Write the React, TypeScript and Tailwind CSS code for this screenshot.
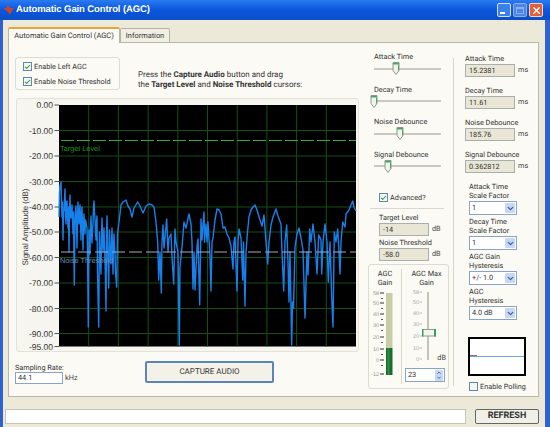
import { X, ChevronDown, ChevronUp, Check } from "lucide-react";

const font = "font-['Roboto','Liberation_Sans',sans-serif] [text-rendering:geometricPrecision]";

// plot coordinates are screen pixels, the graph svg viewBox starts at 16,97
const TICKS = [
  ["0.00", 103],
  ["-10.00", 128.5],
  ["-20.00", 154],
  ["-30.00", 179.5],
  ["-40.00", 205],
  ["-50.00", 230],
  ["-60.00", 255.5],
  ["-70.00", 281],
  ["-80.00", 306.5],
  ["-90.00", 331.5],
  ["-95.00", 344.5],
] as const;

const V_LINES = [87.7, 117.4, 147.1, 176.8, 206.5, 236.2, 265.9, 295.6, 325.3];

const TRACE = [
  [58, 215], [58.5, 190], [59, 184], [60, 180], [60.5, 200], [61, 215], [61.5, 200], [62, 238], [62.5, 210], [63, 208], [64, 187], [64.5, 215], [65, 222], [65.5, 200], [66, 199], [66.5, 215], [67, 226],
  [67.5, 205], [68, 250], [68.5, 215], [69, 193], [69.5, 212], [70, 216], [70.5, 208], [71, 203], [71.5, 218], [72, 232], [72.5, 210], [73.3, 283], [74, 218], [74.5, 208], [75, 204], [75.5, 225], [76, 246], [76.5, 215], [77, 200],
  [77.5, 215], [78, 222], [78.5, 208], [79, 203], [79.5, 220], [80, 238], [80.5, 212], [81, 205], [81.5, 225], [82, 248], [82.5, 220], [83, 212], [83.5, 225], [84, 232], [84.5, 218], [85, 220], [86, 226], [86.5, 250], [87.3, 325],
  [88, 228], [88.5, 240], [89, 252], [89.5, 225], [90, 214], [90.5, 230], [91, 241], [91.5, 228], [92, 222], [92.5, 205], [93, 199], [93.5, 210], [94, 217], [94.5, 230], [95, 238], [95.5, 220], [96, 214], [96.5, 270], [97.7, 325],
  [98.5, 230], [99, 250], [100, 272], [100.5, 235], [101, 216], [101.5, 235], [102, 250], [102.5, 235], [103, 226], [103.5, 245], [104, 258], [104.5, 280], [105, 309], [105.5, 235], [106, 214], [107, 260], [107.7, 286],
  [108.5, 228], [109, 245], [110, 262], [110.5, 240], [111, 226], [111.5, 250], [112, 272], [112.5, 245], [113, 232], [113.5, 245], [114, 250], [114.5, 270], [115.7, 285], [116.5, 232], [118, 220],
  [120, 203], [122, 200], [125, 198], [127, 204], [129, 207], [131, 215], [133, 206], [136.7, 200], [139, 204],
  [142, 211], [145, 204], [148, 202], [151, 203], [153, 205], [155, 220], [156.7, 240], [157.7, 278], [159, 250],
  [160.3, 291], [161, 240], [162, 223], [163, 246], [165.7, 217], [167, 250], [168, 236], [170, 232], [171, 255],
  [172.7, 282], [174, 227], [175, 240], [177, 250], [178.3, 343], [179, 265], [181, 245], [183, 220], [185, 226],
  [188, 212], [190, 222], [191, 240], [192, 287], [193, 250], [194, 288], [196, 245], [197, 237], [198.7, 303],
  [200, 217], [201, 238], [202, 222], [203, 210], [203.5, 240], [205, 222], [206, 240], [207, 220], [209, 254],
  [210, 289], [211, 240], [212, 236], [214, 218], [216, 207], [218, 208], [220, 212], [222, 226], [224, 225],
  [226, 232], [228, 236], [230, 244], [232, 267], [233, 240], [234, 235], [236, 289], [237, 240], [238, 227],
  [240, 236], [241.7, 278], [242.5, 240], [244, 304], [245, 250], [246.5, 230], [248, 215], [250, 208], [252, 205],
  [254, 203], [256, 208], [259, 218], [261, 224], [263, 213], [265, 240], [266.7, 262], [268, 240], [270, 223],
  [272, 215], [275, 207], [277, 214], [280, 222], [281, 250], [282.7, 289], [284, 240], [285.7, 223], [287, 260],
  [288, 300], [289, 250], [290.7, 343], [291.5, 300], [292.5, 306], [294, 245], [296, 232], [298, 226], [300, 236],
  [302, 248], [304, 316], [306, 250], [307, 273], [308.7, 227], [310, 240], [312, 222], [314, 240], [316, 272],
  [317.7, 233], [320, 238], [320.7, 272], [322, 240], [324, 222], [326, 240], [327.3, 280], [329, 240], [330.7, 295],
  [332, 325], [333.3, 230], [335, 240], [336.7, 227], [338, 250], [339, 272], [340, 240], [341.7, 220], [344, 225],
  [345, 212], [348, 208], [351.7, 199], [353, 205], [355, 209],
];

const tracePoints = TRACE.map((p) => p.join(",")).join(" ");

function Graph() {
  return (
    <svg viewBox="16 97 343 254" className="block w-[343px] h-[254px]">
      <rect x="58" y="103" width="297" height="241.5" fill="#000" />
      {TICKS.slice(1, 10).map(([, y]) => (
        <line key={y} x1="58" x2="355" y1={y} y2={y} stroke="#174f17" strokeWidth="1" />
      ))}
      {V_LINES.map((x) => (
        <line key={x} x1={x} x2={x} y1="103" y2="344.5" stroke="#174f17" strokeWidth="1" />
      ))}
      <line x1="60" x2="355" y1="138.5" y2="138.5" stroke="#3aa83a" strokeWidth="1" strokeDasharray="13 3" />
      <polyline points={tracePoints} fill="none" stroke="#1880ea" strokeWidth="1.4" strokeLinejoin="round" />
      <line x1="60" x2="355" y1="250" y2="250" stroke="#a9a9b8" strokeWidth="1" strokeDasharray="13 4" />
      <text x="59" y="149" fontSize="7.3" fill="#1f9a1f" fontFamily="Liberation Sans">Target Level</text>
      <text x="59" y="261" fontSize="7.3" fill="#6d8cb5" fontFamily="Liberation Sans">Noise Threshold</text>
      {TICKS.map(([label, y]) => (
        <g key={label}>
          <text x="52" y={y + 3} textAnchor="end" fontSize="8.5" fill="#333" fontFamily="Liberation Sans">{label}</text>
          <line x1="53.5" x2="58" y1={y} y2={y} stroke="#555" />
        </g>
      ))}
      <text transform="translate(27 225) rotate(-90)" textAnchor="middle" fontSize="8" fill="#333" fontFamily="Liberation Sans">
        Signal Amplitude (dB)
      </text>
    </svg>
  );
}

function Checkbox({ label, checked = true }: { label: string; checked?: boolean }) {
  return (
    <div className="flex items-center gap-[2px] h-[15px] whitespace-nowrap">
      <span className="flex items-center justify-center w-[9px] h-[9px] border border-[#5f88a8] bg-[#f4f6f2]">
        {checked && <Check size={8} strokeWidth={3.5} className="text-[#2f9a3a]" />}
      </span>
      <span className="text-[7.3px] text-[#333] leading-none">{label}</span>
    </div>
  );
}

function Slider({ label, pos }: { label: string; pos: number }) {
  return (
    <div className="h-[32.5px] pl-[6px]">
      <div className="text-[7.3px] leading-[10px] text-[#333] whitespace-nowrap">{label}</div>
      <div className="relative w-[67px] h-[13px] flex items-center">
        <div className="w-full h-[2px] bg-[#c9c9c2]" />
        <svg width="8" height="13" viewBox="0 0 8 13" className="absolute top-0" style={{ left: pos }}>
          <path d="M1 .5h6v8l-3 4-3-4z" fill="#f3f3ec" stroke="#8d9a8e" />
          <path d="M1 1h6v1.5H1zM6 3h1v5l-1 1z" fill="#46a866" />
        </svg>
      </div>
    </div>
  );
}

function Readout({ label, value, unit }: { label: string; value: string; unit: string }) {
  return (
    <div>
      <div className="text-[7.3px] leading-[10px] text-[#333] whitespace-nowrap">{label}</div>
      <div className="flex items-center gap-[3px]">
        <div className="w-[50px] h-[13px] bg-[#e9e6d5] border border-[#a9aeae] text-[7.3px] leading-[11px] pl-[3px] text-[#333]">
          {value}
        </div>
        <span className="text-[7.3px] text-[#444]">{unit}</span>
      </div>
    </div>
  );
}

function Select({ label, value }: { label: [string, string]; value: string }) {
  return (
    <div className="h-[35px] pl-[4px]">
      <div className="text-[7.3px] leading-[9px] text-[#333]">
        {label[0]}
        <br />
        {label[1]}
      </div>
      <div className="flex items-center justify-between w-[48px] h-[14px] mt-[1px] bg-white border border-[#8aa4c4] pl-[2px] pr-[1px] text-[7.3px] text-[#333]">
        <span>{value}</span>
        <span className="flex items-center justify-center w-[10px] h-[10px] bg-[#c8d8f4] rounded-[1px]">
          <ChevronDown size={9} strokeWidth={3.5} className="text-[#3a5fa8]" />
        </span>
      </div>
    </div>
  );
}

function GainGauge() {
  const rows = [["58", 292], ["50", 302], ["40", 313], ["30", 324], ["20", 336], ["10", 348], ["0", 359], ["-12", 373]] as const;
  return (
    <svg viewBox="371 288 30 90" className="block w-[30px] h-[90px]">
      <rect x="389" y="292" width="6.5" height="55" fill="#c9cda3" />
      <rect x="389" y="347" width="6.5" height="27" fill="#1c6b2e" />
      <rect x="390.5" y="347" width="2" height="27" fill="#2f8f48" />
      {rows.map(([t, y]) => (
        <g key={t}>
          <text x="382" y={y + 2} textAnchor="end" fontSize="5.5" fill="#999" fontFamily="Liberation Sans">{t}</text>
          <line x1="383" x2="387" y1={y} y2={y} stroke="#333" strokeWidth="1" />
          <line x1="384" x2="386" y1={y + 5.5} y2={y + 5.5} stroke="#555" strokeWidth="1" />
        </g>
      ))}
    </svg>
  );
}

function MaxGainSlider() {
  const rows = [["58", 292], ["50", 302], ["40", 313], ["30", 324], ["20", 336], ["10", 348], ["0", 359]] as const;
  return (
    <svg viewBox="405 288 43 76" className="block w-[43px] h-[76px]">
      <rect x="427" y="292" width="2" height="68" fill="#c3c3bb" />
      {rows.map(([t, y]) => (
        <g key={t}>
          <text x="419" y={y + 2} textAnchor="end" fontSize="5.5" fill="#aaa" fontFamily="Liberation Sans">{t}</text>
          <line x1="419.5" x2="422" y1={y} y2={y} stroke="#bbb" strokeWidth="1" />
        </g>
      ))}
      <rect x="422.5" y="329.5" width="13" height="6.5" fill="#f4f4ec" stroke="#8fa08f" />
      <rect x="434" y="329" width="2" height="7.5" fill="#3d9d5c" />
      <rect x="422" y="329" width="1.5" height="7.5" fill="#3d9d5c" />
    </svg>
  );
}

export default function App() {
  return (
    <div className={`${font} w-[550px] h-[427px] overflow-hidden flex flex-col bg-[#ece9d8]`}>
      {/* title bar */}
      <div className="h-[20px] shrink-0 flex items-center pl-[4px] pr-[7px] bg-gradient-to-b from-[#2a7bf0] via-[#0a55dc] to-[#0b4fc8]">
        <svg width="10" height="10" viewBox="0 0 10 10" className="shrink-0">
          <path d="M0 3h3V1h2l1 2h4L8 6 6 9.5 4.5 8 3 6 1 5z" fill="#c8442c" />
        </svg>
        <span className="ml-[2px] text-[9.5px] tracking-[-0.1px] font-bold text-white font-['Liberation_Sans']">Automatic Gain Control (AGC)</span>
        <div className="ml-auto flex gap-[2px]">
          <div className="w-[14px] h-[14px] rounded-[2px] border border-[#cfe0fb] bg-[#3c7fe8] flex items-end pl-[2px] pb-[2px]">
            <div className="w-[5px] h-[2px] bg-white" />
          </div>
          <div className="w-[14px] h-[14px] rounded-[2px] border border-[#8eb0ee] bg-[#4d86e4] flex items-center justify-center">
            <div className="w-[8px] h-[7px] border border-[#8eb0ee] border-t-2" />
          </div>
          <div className="w-[14px] h-[14px] rounded-[2px] border border-[#f3d4c8] bg-[#e0603a] flex items-center justify-center">
            <X size={11} strokeWidth={3} className="text-white" />
          </div>
        </div>
      </div>

      <div className="flex-1 flex flex-col border-l-[3px] border-r-[5px] border-[#2e62cf]">
        {/* tabs */}
        <div className="flex items-end h-[22px] pl-[5px]">
          <div className="relative z-10 w-[112px] h-[16px] -mb-px flex items-center justify-center whitespace-nowrap bg-[#fbfaf5] border border-b-0 border-[#b5b5a5] border-t-2 border-t-[#e8a33c] rounded-t-[2px] text-[7.5px] text-[#333]">
            Automatic Gain Control (AGC)
          </div>
          <div className="w-[50px] h-[14px] flex items-center justify-center bg-[#f1efe4] border border-b-0 border-[#b5b5a5] rounded-t-[2px] text-[7.4px] text-[#333]">
            Information
          </div>
        </div>

        {/* tab panel */}
        <div className="ml-[5px] w-[531px] h-[355px] flex bg-[#fbfaf5] border border-[#b8b8aa]">
          {/* left column */}
          <div className="w-[357px] shrink-0 pl-[6px] pt-[14px]">
            <div className="flex h-[33px]">
              <div className="w-[105px] h-[33px] pl-[7px] pt-[1px] border border-[#dcdcd2] rounded-[3px]">
                <Checkbox label="Enable Left AGC" />
                <Checkbox label="Enable Noise Threshold" />
              </div>
              <div className="ml-[18px] pt-[13px] text-[8px] leading-[10px] text-[#333] whitespace-nowrap">
                Press the <b>Capture Audio</b> button and drag
                <br />
                the <b>Target Level</b> and <b>Noise Threshold</b> cursors:
              </div>
            </div>
            <div className="mt-[8px] ml-[1px] w-[343px] h-[254px] bg-[#f6f5ef] border border-[#e2e2d8] rounded-[3px] overflow-hidden">
              <Graph />
            </div>
            <div className="flex mt-[9px]">
              <div className="w-[130px] pt-[2px]">
                <div className="text-[7.3px] leading-[9px] text-[#333]">Sampling Rate:</div>
                <div className="flex items-center gap-[2px]">
                  <div className="w-[48px] h-[12px] bg-white border border-[#8aa4c4] pl-[2px] text-[7.3px] leading-[10px] text-[#333]">44.1</div>
                  <span className="text-[7.3px] text-[#444]">kHz</span>
                </div>
              </div>
              <div className="w-[129px] h-[22px] flex items-center justify-center bg-[#f3f1e8] border-2 border-[#5b84bd] rounded-[2px] text-[8px] text-[#333]">
                CAPTURE AUDIO
              </div>
            </div>
          </div>

          {/* sliders and AGC */}
          <div className="w-[87px] shrink-0 pt-[9px] pl-[2px]">
            <Slider label="Attack Time" pos={18} />
            <Slider label="Decay Time" pos={-4} />
            <Slider label="Noise Debounce" pos={22} />
            <Slider label="Signal Debounce" pos={10} />
            <div className="mt-[8px] pl-[11px]">
              <Checkbox label="Advanced?" />
            </div>
            <div className="mt-[3px] ml-[2px] w-[74px] border-t border-[#d8d8cc]" />
            <div className="mt-[4px] pl-[11px] flex flex-col gap-[2px]">
              <Readout label="Target Level" value="-14" unit="dB" />
              <Readout label="Noise Threshold" value="-58.0" unit="dB" />
            </div>
            <div className="mt-[3px] w-[81px] h-[125px] flex border border-[#dcdcd2] rounded-[3px]">
              <div className="w-[33px] border-r border-[#d8d8cc] my-[4px]">
                <div className="text-[7.3px] leading-[9px] text-center text-[#333]">
                  AGC
                  <br />
                  Gain
                </div>
                <div className="mt-[2px] -ml-[1px]">
                  <GainGauge />
                </div>
              </div>
              <div className="flex-1 pt-[4px] pl-[3px]">
                <div className="text-[7.3px] leading-[9px] text-center text-[#333]">
                  AGC Max
                  <br />
                  Gain
                </div>
                <div className="relative mt-[1px]">
                  <MaxGainSlider />
                  <span className="absolute right-[2px] top-[66px] text-[7.3px] leading-none text-[#444]">dB</span>
                </div>
                <div className="mt-[4px] w-[40px] h-[14px] flex items-center justify-between bg-white border border-[#8aa4c4] pl-[2px] pr-[1px] text-[7.3px] text-[#333]">
                  23
                  <span className="flex flex-col items-center w-[8px] h-[11px] bg-[#c8d8f4] rounded-[1px]">
                    <ChevronUp size={6} strokeWidth={4} className="text-[#3a5fa8]" />
                    <ChevronDown size={6} strokeWidth={4} className="text-[#3a5fa8]" />
                  </span>
                </div>
              </div>
            </div>
          </div>

          <div className="w-px h-[328px] mt-[15px] bg-[#d6d6ca] shrink-0" />

          {/* right column */}
          <div className="flex-1 pl-[11px] pt-[11px]">
            <div className="flex flex-col gap-[9px] h-[128px]">
              <Readout label="Attack Time" value="15.2381" unit="ms" />
              <Readout label="Decay Time" value="11.61" unit="ms" />
              <Readout label="Noise Debounce" value="185.76" unit="ms" />
              <Readout label="Signal Debounce" value="0.362812" unit="ms" />
            </div>
            <Select label={["Attack Time", "Scale Factor"]} value="1" />
            <Select label={["Decay Time", "Scale Factor"]} value="1" />
            <Select label={["AGC Gain", "Hysteresis"]} value="+/- 1.0" />
            <Select label={["AGC", "Hysteresis"]} value="4.0 dB" />
            <div className="ml-[3px] mt-[15px] w-[58px] h-[39px] bg-white border-2 border-black flex items-center relative">
              <div className="w-full h-px bg-[#6da6dc]" />
              <div className="absolute left-0 top-[16px] w-[7px] h-px bg-[#a06a6a]" />
            </div>
            <div className="ml-[4px] mt-[3px]">
              <Checkbox label="Enable Polling" checked={false} />
            </div>
          </div>
        </div>

        {/* status row */}
        <div className="flex items-center gap-[9px] mt-[12px] pl-[2px]">
          <div className="w-[461px] h-[15px] bg-white border border-[#c5c5b8]" />
          <div className="w-[64px] h-[15px] flex items-center justify-center bg-[#f1efe6] border border-[#5a6a70] rounded-[2px] text-[9px] font-bold text-[#333]">
            REFRESH
          </div>
        </div>
      </div>
    </div>
  );
}
